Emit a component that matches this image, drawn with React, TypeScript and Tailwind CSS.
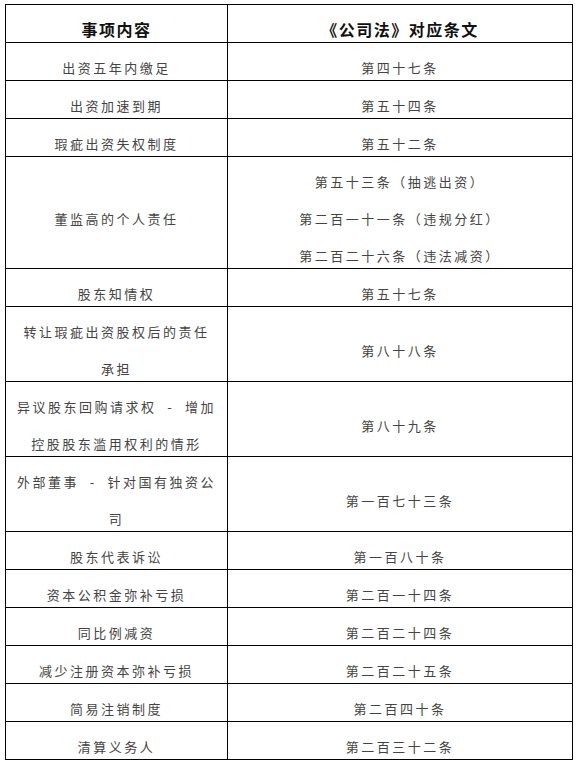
import React from 'react'

interface Row { item: string[]; articles: string[] }

const SP = '\u00a0\u00a0-\u00a0\u00a0'

const ROWS: Row[] = [
  { item: ['出资五年内缴足'], articles: ['第四十七条'] },
  { item: ['出资加速到期'], articles: ['第五十四条'] },
  { item: ['瑕疵出资失权制度'], articles: ['第五十二条'] },
  {
    item: ['董监高的个人责任'],
    articles: ['第五十三条（抽逃出资）', '第二百一十一条（违规分红）', '第二百二十六条（违法减资）'],
  },
  { item: ['股东知情权'], articles: ['第五十七条'] },
  { item: ['转让瑕疵出资股权后的责任', '承担'], articles: ['第八十八条'] },
  { item: ['异议股东回购请求权' + SP + '增加', '控股股东滥用权利的情形'], articles: ['第八十九条'] },
  { item: ['外部董事' + SP + '针对国有独资公', '司'], articles: ['第一百七十三条'] },
  { item: ['股东代表诉讼'], articles: ['第一百八十条'] },
  { item: ['资本公积金弥补亏损'], articles: ['第二百一十四条'] },
  { item: ['同比例减资'], articles: ['第二百二十四条'] },
  { item: ['减少注册资本弥补亏损'], articles: ['第二百二十五条'] },
  { item: ['简易注销制度'], articles: ['第二百四十条'] },
  { item: ['清算义务人'], articles: ['第二百三十二条'] },
]

const FONT = "font-['Noto_Sans_CJK_SC',sans-serif]"

// text sits a bit low in each line, like a Word table with exact line spacing
function Cell({ lines, head, last }: { lines: string[]; head?: boolean; last?: boolean }) {
  return (
    <div className={`flex flex-col justify-center text-center pt-[6px] ${last ? '' : 'border-r border-black'}`}>
      <div
        className={
          head
            ? 'leading-[37px] -mb-[6px] text-[16px] font-bold tracking-[1.5px] text-[#111]'
            : 'leading-[37px] -mb-[6px] text-[13px] tracking-[2.5px] text-[#444]'
        }
      >
        {lines.map((l, i) => (
          <div key={i}>{l}</div>
        ))}
      </div>
    </div>
  )
}

export default function App() {
  return (
    <div className={`bg-white w-[576px] h-[769px] pl-[5px] pt-[4px] ${FONT}`}>
      <div className="w-[568px] border-t border-l border-r border-black">
        <div className="grid grid-cols-[222px_1fr] border-b border-black">
          <Cell lines={['事项内容']} head />
          <Cell lines={['《公司法》对应条文']} head last />
        </div>
        {ROWS.map((r, i) => (
          <div key={i} className="grid grid-cols-[222px_1fr] border-b border-black">
            <Cell lines={r.item} />
            <Cell lines={r.articles} last />
          </div>
        ))}
      </div>
    </div>
  )
}
